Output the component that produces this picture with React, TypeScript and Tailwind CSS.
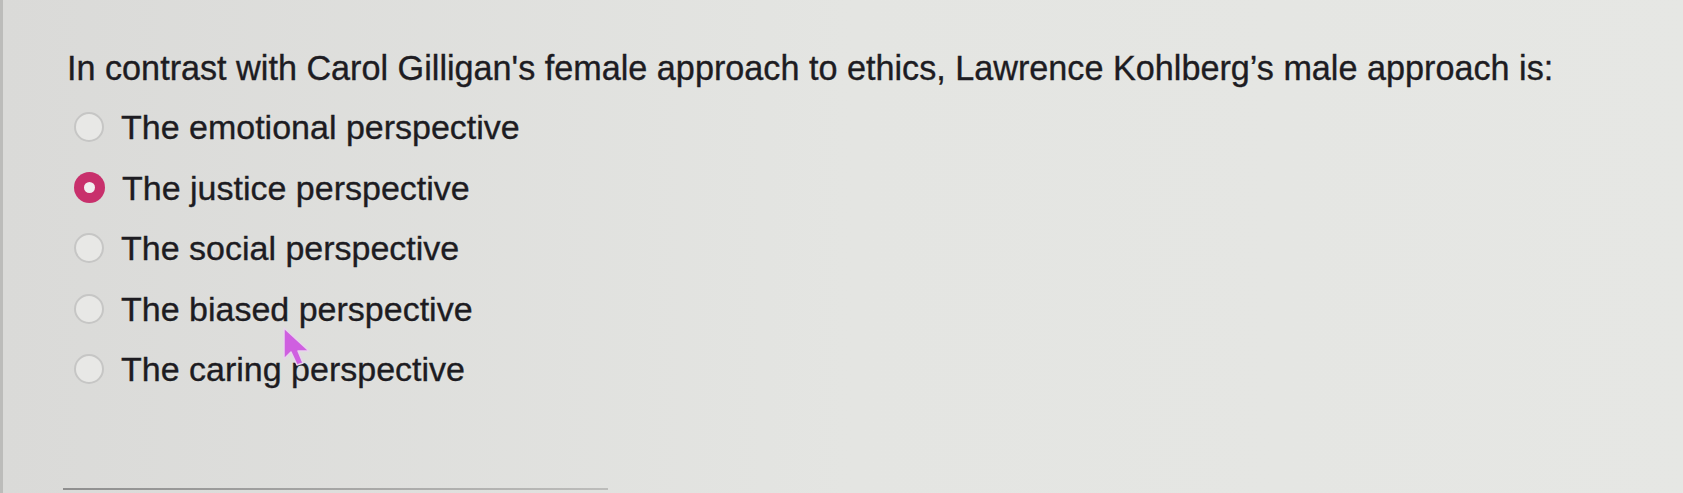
import React, { useState } from 'react';

const options = [
  'The emotional perspective',
  'The justice perspective',
  'The social perspective',
  'The biased perspective',
  'The caring perspective',
];

const Radio: React.FC<{ checked: boolean }> = ({ checked }) =>
  checked ? (
    <span className="w-[31px] h-[31px] rounded-full bg-[#c8306c] flex items-center justify-center shrink-0">
      <span className="w-[11px] h-[11px] rounded-full bg-[#f1eef0]"></span>
    </span>
  ) : (
    <span className="w-[30px] h-[30px] rounded-full border-[2px] border-[#c6c6c5] bg-[#e8e8e6] shrink-0"></span>
  );

const Cursor: React.FC = () => (
  <svg
    className="absolute left-[279px] top-[326px] w-[30px] h-[42px] pointer-events-none"
    viewBox="0 0 30 42"
  >
    <path
      d="M2 2 L2 33 L9 26 L15 39 L21 37 L16 25 L27 25 Z"
      fill="#cf5fe0"
      stroke="#e7d3ec"
      strokeWidth="1.5"
      strokeLinejoin="round"
    />
  </svg>
);

export default function App() {
  const [selected, setSelected] = useState(1);

  return (
    <div
      className="relative w-[1683px] h-[493px] overflow-hidden flex flex-col bg-gradient-to-r from-[#dadad8] via-[#e4e5e2] to-[#e6e7e4] border-l-[3px] border-[#bcbcba] text-[#1d1c22]"
      style={{ fontFamily: '"Liberation Sans", Arial, sans-serif' }}
    >
      <div className="pt-[48px] pl-[64px]">
        <p className="text-[34.2px] leading-[40px] h-[40px] whitespace-nowrap [-webkit-text-stroke:0.35px_#1d1c22]">
          In contrast with Carol Gilligan's female approach to ethics, Lawrence Kohlberg’s male approach is:
        </p>
        <ul className="mt-[19px] flex flex-col gap-[20.5px]">
          {options.map((label, i) => (
            <li
              key={label}
              className="flex items-center h-[40px] pl-[7px] gap-[17px] cursor-pointer"
              onClick={() => setSelected(i)}
            >
              <Radio checked={selected === i} />
              <span className="text-[34px] leading-[40px] whitespace-nowrap [-webkit-text-stroke:0.35px_#1d1c22]">
                {label}
              </span>
            </li>
          ))}
        </ul>
      </div>
      <div className="mt-auto mb-[3px] ml-[60px] w-[545px] h-[2px] bg-gradient-to-r from-[#8f8f8f] to-[#bdbdbb]"></div>
      <Cursor />
    </div>
  );
}
